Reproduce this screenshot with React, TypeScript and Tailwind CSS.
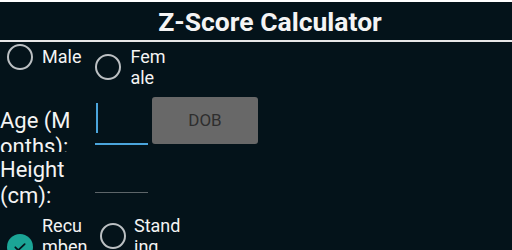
import React from "react";

function Radio({ checked = false }: { checked?: boolean }) {
  if (checked) {
    return (
      <div className="-my-[3px] flex h-[26px] w-[26px] shrink-0 items-center justify-center rounded-full bg-[#1ba596]">
        <svg width="14" height="14" viewBox="0 0 24 24" fill="none" stroke="#05161d" strokeWidth="3" strokeLinecap="round" strokeLinejoin="round">
          <path d="M4 12.5l5 5L20 7" />
        </svg>
      </div>
    );
  }
  return <div className="-my-[3px] h-[26px] w-[26px] shrink-0 rounded-full border-2 border-[#bcc0c3]" />;
}

export default function App() {
  return (
    <div className="h-[250px] w-[512px] overflow-hidden bg-[#04131a] text-[#f4f4f4] [font-family:Roboto,'Liberation_Sans',sans-serif]">
      <div className="h-[2px] bg-white" />
      <div className="flex h-[38px] items-center justify-center pl-[28px]">
        <h1 className="pt-[2px] text-[26.5px] font-bold leading-none">Z-Score Calculator</h1>
      </div>
      <div className="h-[2px] bg-[#e8e8e8]" />

      {/* gender */}
      <div className="flex items-start pt-[4px] text-[18px] leading-[21px]">
        <div className="ml-[7px] flex items-center">
          <Radio />
          <span className="ml-[9px]">Male</span>
        </div>
        <div className="ml-[14px] flex items-center">
          <Radio />
          <span className="ml-[9px] w-[42px] break-all">Female</span>
        </div>
      </div>

      {/* age */}
      <div className="mt-[9px] flex items-start">
        <div className="mt-[11px] h-[44px] w-[80px] overflow-hidden break-all text-[22px] leading-[26px]">Age (Months):</div>
        <div className="ml-[15px] flex w-[53px] flex-col">
          <div className="ml-[1px] mt-[6px] h-[30px] w-[2px] bg-[#4ba5dc]" />
          <div className="mt-[10px] h-[2px] bg-[#4ba5dc]" />
        </div>
        <button className="ml-[4px] h-[47px] w-[106px] rounded-[3px] bg-[#686868] text-[17px] text-[#2e2e2e]">
          DOB
        </button>
      </div>

      {/* height */}
      <div className="mt-[5px] flex items-start">
        <div className="w-[80px] text-[22px] leading-[26px]">Height (cm):</div>
        <div className="ml-[15px] mt-[35px] h-[1px] w-[53px] bg-[#5d6569]" />
      </div>

      {/* position */}
      <div className="mt-[6px] flex items-start text-[18px] leading-[21px]">
        <div className="ml-[7px] flex items-center">
          <Radio checked />
          <span className="ml-[9px] w-[48px] break-all">Recumbent</span>
        </div>
        <div className="ml-[10px] flex items-center">
          <Radio />
          <span className="ml-[8px] w-[48px] break-all">Standing</span>
        </div>
      </div>
    </div>
  );
}
